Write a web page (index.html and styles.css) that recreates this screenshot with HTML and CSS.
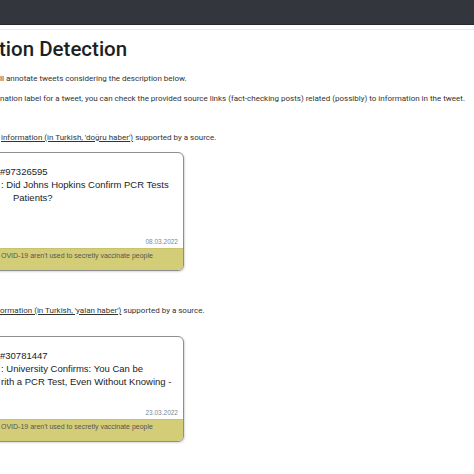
FILE: index.html
```html
<!DOCTYPE html>
<html>
<head>
<meta charset="utf-8">
<link rel="stylesheet" href="styles.css">
</head>
<body>
<header class="topbar"></header>
<div class="rule"></div>
<main class="page">
  <h1 class="title">tion Detection</h1>
  <p class="intro">ll annotate tweets considering the description below.</p>
  <p class="intro">nation label for a tweet, you can check the provided source links (fact-checking posts) related (possibly) to information in the tweet.</p>

  <p class="label first"><span class="lead"> </span><u>information (in Turkish, 'doğru haber')</u> supported by a source.</p>
  <div class="card">
    <div class="card-body">
      <div class="line id">#97326595</div>
      <div class="line">: Did Johns Hopkins Confirm PCR Tests</div>
      <div class="line indent">Patients?</div>
      <div class="line">&nbsp;</div>
      <div class="date">08.03.2022</div>
    </div>
    <div class="card-foot">OVID-19 aren't used to secretly vaccinate people</div>
  </div>

  <p class="label second"><u>ormation (in Turkish, 'yalan haber')</u> supported by a source.</p>
  <div class="card card-later">
    <div class="card-body">
      <div class="line id">#30781447</div>
      <div class="line">: University Confirms: You Can be</div>
      <div class="line">rith a PCR Test, Even Without Knowing -</div>
      <div class="date">23.03.2022</div>
    </div>
    <div class="card-foot">OVID-19 aren't used to secretly vaccinate people</div>
  </div>
</main>
</body>
</html>
```

FILE: styles.css
```css
html, body {
  margin: 0;
  padding: 0;
  background: #ffffff;
  overflow: hidden;
}

body {
  width: 474px;
  height: 474px;
  font-family: Roboto, "Liberation Sans", sans-serif;
  color: #212529;
}

.topbar {
  height: 24px;
  background: #33373d;
  border-bottom: 1px solid #25282c;
}

.rule {
  height: 4px;
  border-bottom: 1px solid #eeeeee;
}

.page {
  padding: 0;
}

.title {
  margin: 5px 0 0 -1px;
  font-size: 20.5px;
  font-weight: 500;
  line-height: 28px;
  color: #1d1f22;
  white-space: nowrap;
}

.intro {
  margin: 11px 0 0 0;
  font-size: 8px;
  line-height: 10px;
  color: #333;
  white-space: nowrap;
}

.intro + .intro {
  margin-top: 10px;
}

.label {
  font-size: 8px;
  line-height: 10px;
  color: #333;
  white-space: nowrap;
}

.label u {
  color: #333;
}

.label.first {
  margin: 29px 0 0 0;
}

.label.second {
  margin: 35px 0 0 0;
}

.lead {
  display: inline-block;
  width: 1px;
}

.card {
  margin: 9px 0 0 -20px;
  width: 202px;
  border: 1px solid #8e8e8e;
  border-radius: 6px;
  overflow: hidden;
  box-shadow: 1px 1px 2px rgba(0, 0, 0, 0.15);
  background: #fff;
}

.card.card-later {
  margin-top: 20px;
}

.card-body {
  padding: 12px 5px 1px 20px;
  font-family: "Liberation Sans", Arial, sans-serif;
  font-size: 9.5px;
  line-height: 13px;
  color: #222;
}

.line {
  white-space: nowrap;
}

.line.id {
  margin-left: -1px;
}

.line.indent {
  padding-left: 12px;
}

.date {
  margin-top: 20px;
  text-align: right;
  font-size: 6.5px;
  line-height: 10px;
  color: #7c8896;
}

.card-foot {
  height: 22px;
  box-sizing: border-box;
  padding: 2px 0 0 20px;
  background: #d4cd78;
  border-top: 1px solid #c9c270;
  font-family: "Liberation Sans", Arial, sans-serif;
  font-size: 7px;
  line-height: 10px;
  color: #555;
  white-space: nowrap;
}
```
